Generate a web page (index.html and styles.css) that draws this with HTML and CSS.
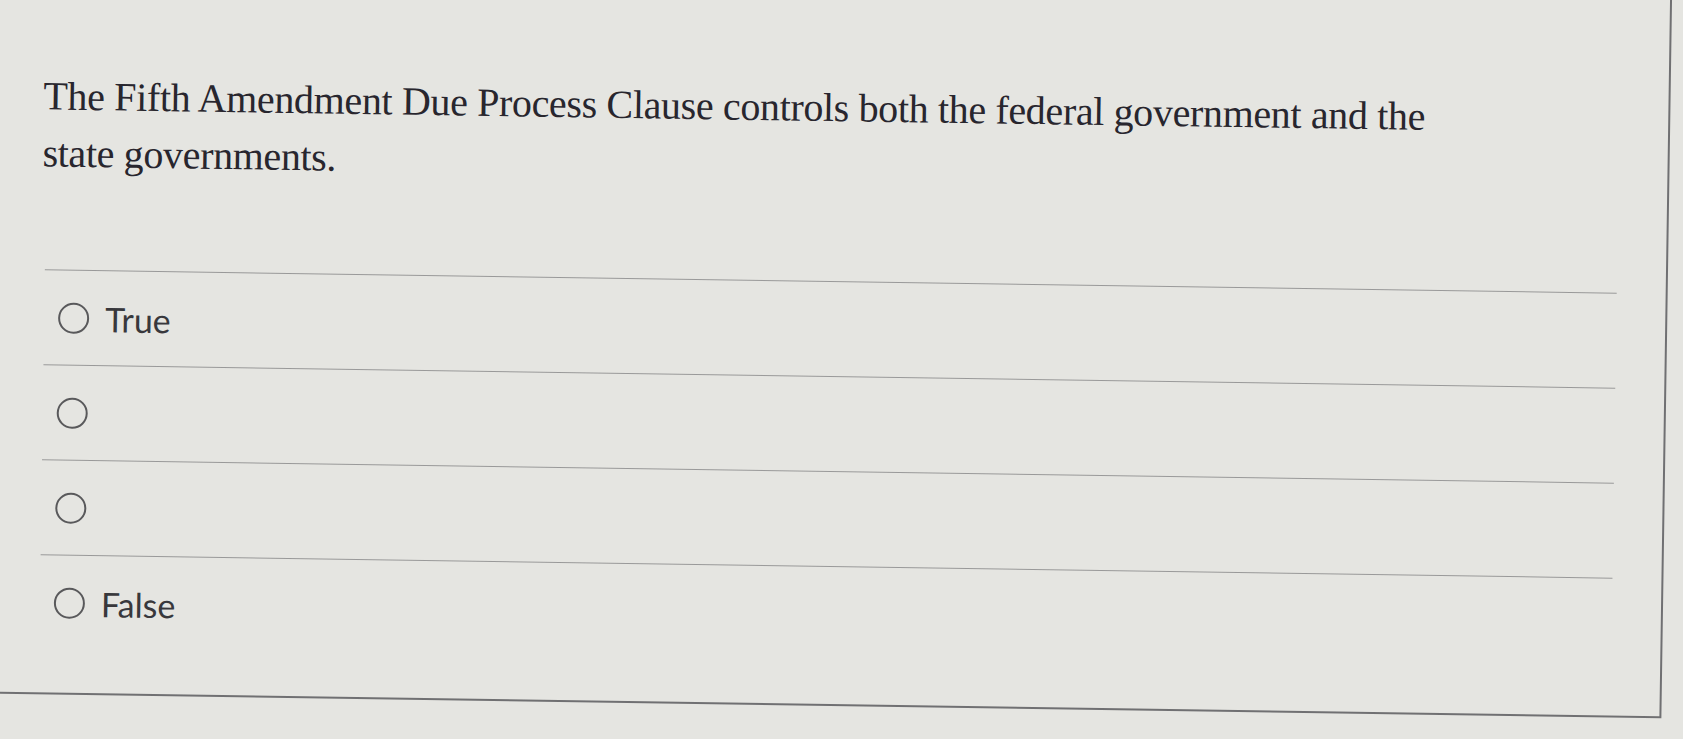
FILE: index.html
```html
<!DOCTYPE html>
<html lang="en">
<head>
    <meta charset="UTF-8">
    <meta name="viewport" content="width=device-width, initial-scale=1.0">
    <title>Question</title>
    <link rel="stylesheet" href="styles.css">
</head>
<body>
    <div class="question-card">
        <p class="question-text">The Fifth Amendment Due Process Clause controls both the federal government and the state governments.</p>

        <ul class="answer-list">
            <li class="answer">
                <span class="radio"></span>
                <span class="answer-label">True</span>
            </li>
            <li class="answer">
                <span class="radio"></span>
                <span class="answer-label"></span>
            </li>
            <li class="answer">
                <span class="radio"></span>
                <span class="answer-label"></span>
            </li>
            <li class="answer">
                <span class="radio"></span>
                <span class="answer-label">False</span>
            </li>
        </ul>
    </div>
</body>
</html>
```

FILE: styles.css
```css
body {
    margin: 0;
    background-color: #e5e5e1;
    overflow: hidden;
    height: 100vh;
}

.question-card {
    margin: -30px 0 0 -30px;
    width: 1696px;
    box-sizing: border-box;
    padding: 107px 0 43px 67px;
    border: 2px solid #707072;
    background-color: #e5e5e1;
    transform: rotate(0.85deg);
    transform-origin: 860px 430px;
}

.question-text {
    margin: 0;
    width: 1440px;
    font-family: "Liberation Serif", "Times New Roman", serif;
    font-size: 40px;
    letter-spacing: -0.35px;
    line-height: 57px;
    color: #28262e;
}

.answer-list {
    list-style-type: none;
    margin: 88px 0 0 4px;
    padding: 0;
    width: 1572px;
}

.answer {
    height: 95px;
    box-sizing: border-box;
    border-top: 1.5px solid #999999;
    display: flex;
    align-items: center;
    gap: 16px;
    padding-left: 14px;
}

.radio {
    width: 31px;
    height: 31px;
    box-sizing: border-box;
    border: 2.5px solid #59595b;
    border-radius: 50%;
    flex-shrink: 0;
}

.answer-label {
    font-family: Lato, "Open Sans", sans-serif;
    font-size: 34px;
    color: #38383c;
}
```
